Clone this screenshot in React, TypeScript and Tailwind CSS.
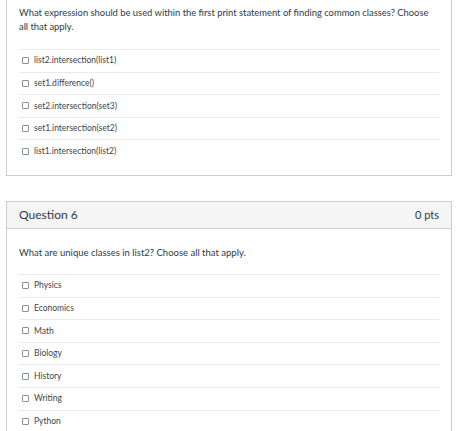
import React from 'react';

const firstOptions = [
  'list2.intersection(list1)',
  'set1.difference()',
  'set2.intersection(set3)',
  'set1.intersection(set2)',
  'list1.intersection(list2)',
];

const secondOptions = ['Physics', 'Economics', 'Math', 'Biology', 'History', 'Writing', 'Python'];

function Option({ label }: { label: string }) {
  return (
    <div className="flex h-[22.6px] items-center border-t border-[#e8eaec] pl-[3px]">
      <span className="mr-[5px] h-[7px] w-[7px] rounded-[1px] border border-[#8a9196] bg-white" />
      <span className="text-[8.5px] text-[#3d454b]">{label}</span>
    </div>
  );
}

export default function App() {
  return (
    <div
      className="h-[431px] w-[474px] overflow-hidden bg-white text-[#2d3b45]"
      style={{ fontFamily: 'Lato, "Open Sans", sans-serif' }}
    >
      {/* previous question, top cut off */}
      <div className="-mt-[20px] ml-[6px] w-[446px] border border-[#c7cdd1] bg-white px-[12px] pb-[13px] pt-[25px]">
        <p className="text-[9.4px] leading-[14px]">
          What expression should be used within the first print statement of finding common classes? Choose
          all that apply.
        </p>
        <div className="mt-[15px]">
          {firstOptions.map((o) => (
            <Option key={o} label={o} />
          ))}
        </div>
      </div>

      {/* question 6 */}
      <div className="ml-[6px] mt-[25px] w-[446px] border border-[#c7cdd1] bg-white">
        <div className="flex h-[27px] items-center justify-between border-b border-[#c7cdd1] bg-[#f5f5f5] px-[12px]">
          <span className="text-[12px] text-[#2d3b45]">Question 6</span>
          <span className="text-[11px] text-[#2d3b45]">0 pts</span>
        </div>
        <div className="px-[12px] pt-[17px]">
          <p className="text-[9.5px] leading-[14px]">What are unique classes in list2? Choose all that apply.</p>
          <div className="mt-[14px]">
            {secondOptions.map((o) => (
              <Option key={o} label={o} />
            ))}
          </div>
        </div>
      </div>
    </div>
  );
}
